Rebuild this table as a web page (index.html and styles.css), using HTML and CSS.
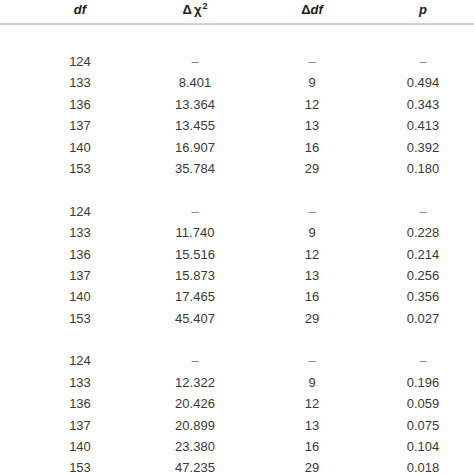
FILE: index.html
```html
<!DOCTYPE html>
<html>
<head>
<meta charset="utf-8">
<link rel="stylesheet" href="styles.css">
</head>
<body>
<div class="table">
  <div class="row head">
    <span><i>df</i></span>
    <span>Δ<span class="chi">χ</span><sup>2</sup></span>
    <span>Δ<i>df</i></span>
    <span><i>p</i></span>
  </div>
  <div class="spacer"></div>
  <div class="group">
    <div class="row"><span>124</span><span class="dash">–</span><span class="dash">–</span><span class="dash">–</span></div>
    <div class="row"><span>133</span><span>8.401</span><span>9</span><span>0.494</span></div>
    <div class="row"><span>136</span><span>13.364</span><span>12</span><span>0.343</span></div>
    <div class="row"><span>137</span><span>13.455</span><span>13</span><span>0.413</span></div>
    <div class="row"><span>140</span><span>16.907</span><span>16</span><span>0.392</span></div>
    <div class="row"><span>153</span><span>35.784</span><span>29</span><span>0.180</span></div>
  </div>
  <div class="group">
    <div class="row"><span>124</span><span class="dash">–</span><span class="dash">–</span><span class="dash">–</span></div>
    <div class="row"><span>133</span><span>11.740</span><span>9</span><span>0.228</span></div>
    <div class="row"><span>136</span><span>15.516</span><span>12</span><span>0.214</span></div>
    <div class="row"><span>137</span><span>15.873</span><span>13</span><span>0.256</span></div>
    <div class="row"><span>140</span><span>17.465</span><span>16</span><span>0.356</span></div>
    <div class="row"><span>153</span><span>45.407</span><span>29</span><span>0.027</span></div>
  </div>
  <div class="group">
    <div class="row"><span>124</span><span class="dash">–</span><span class="dash">–</span><span class="dash">–</span></div>
    <div class="row"><span>133</span><span>12.322</span><span>9</span><span>0.196</span></div>
    <div class="row"><span>136</span><span>20.426</span><span>12</span><span>0.059</span></div>
    <div class="row"><span>137</span><span>20.899</span><span>13</span><span>0.075</span></div>
    <div class="row"><span>140</span><span>23.380</span><span>16</span><span>0.104</span></div>
    <div class="row"><span>153</span><span>47.235</span><span>29</span><span>0.018</span></div>
  </div>
</div>
</body>
</html>
```

FILE: styles.css
```css
html, body {
  margin: 0;
  padding: 0;
  background: #ffffff;
}
body {
  font-family: "Liberation Sans", Arial, sans-serif;
  font-size: 13px;
  color: #3a3a3a;
  overflow: hidden;
}
.table {
  width: 474px;
}
.row {
  display: grid;
  grid-template-columns: 116px 114px 120px 102px;
  padding-left: 22px;
  height: 21.4px;
  line-height: 21.4px;
  text-align: center;
}
.head {
  height: 23px;
  line-height: 19px;
  font-weight: bold;
  color: #1e1e1e;
  border-bottom: 2px solid #d2d2d2;
}
.head i {
  font-style: italic;
}
.head .chi {
  font-style: normal;
  margin-left: 2px;
}
.head sup {
  font-size: 9px;
  line-height: 0;
  vertical-align: 5px;
  margin-left: 1px;
}
.spacer {
  height: 26px;
}
.group {
  padding-bottom: 21.4px;
}
.dash {
  color: #8a8a8a;
}
```
